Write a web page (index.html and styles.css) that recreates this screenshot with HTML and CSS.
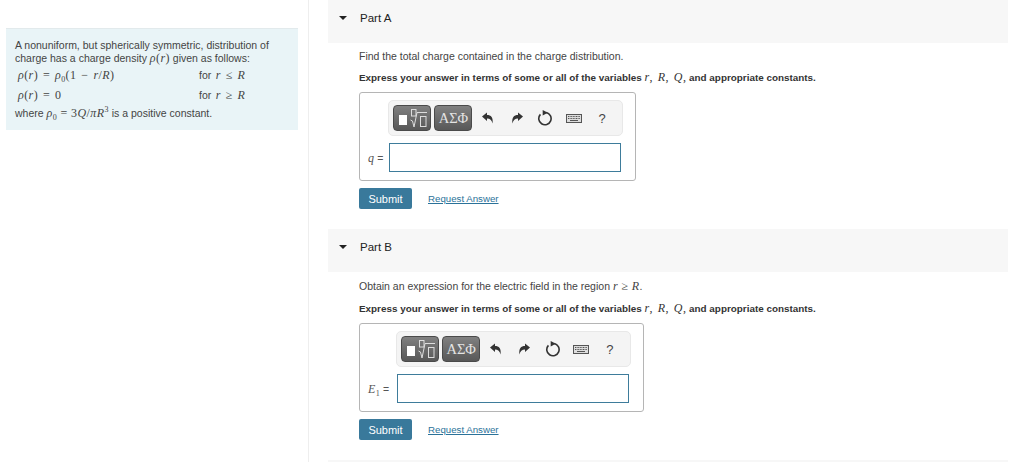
FILE: index.html
```html
<!DOCTYPE html>
<html lang="en">
<head>
  <meta charset="UTF-8">
  <title>Part A and Part B</title>
  <link rel="stylesheet" href="styles.css">
</head>
<body>
  <svg class="icon-defs" width="0" height="0">
    <symbol id="i-template" viewBox="0 0 38 26">
      <rect x="6" y="10" width="8" height="10" fill="#fff"/>
      <rect x="18.500" y="4.500" width="4.500" height="6.500" fill="none" stroke="#ddd"/>
      <path d="M17.500 15l2 1 1.500 6 3-14.500h10" fill="none" stroke="#ddd"/>
      <rect x="27.500" y="11.500" width="5.500" height="10" fill="none" stroke="#ddd"/>
    </symbol>
    <symbol id="i-undo" viewBox="0 0 14 14">
      <path d="M1 5.500L6 1.500V4C10 4 12.500 6.500 11.500 12.500C10.800 9 9 7.500 6 7.500V10Z" fill="#333"/>
    </symbol>
    <symbol id="i-redo" viewBox="0 0 14 14">
      <path d="M13 5.500L8 1.500V4C4 4 1.500 6.500 2.500 12.500C3.200 9 5 7.500 8 7.500V10Z" fill="#333"/>
    </symbol>
    <symbol id="i-reset" viewBox="0 0 14 14">
      <path d="M8 2.200A5.400 5.400 0 1 1 3 3.800" fill="none" stroke="#333" stroke-width="1.400"/>
      <path d="M5 0L9.400 2.300 5 4.800Z" fill="#333"/>
    </symbol>
    <symbol id="i-keys" viewBox="0 0 16 9">
      <rect x=".5" y=".5" width="15" height="8" fill="#ddd" stroke="#555"/>
      <path d="M2 2.500h12M2 4.500h12" stroke="#555" stroke-dasharray="1 .6"/>
      <path d="M4 6.500h8" stroke="#555"/>
    </symbol>
  </svg>

  <div class="page">
    <aside class="sidebar">
      <div class="intro">
        <p>A nonuniform, but spherically symmetric, distribution of charge has a charge density <span class="math"><i>ρ</i>(<i>r</i>)</span> given as follows:</p>
        <div class="cases">
          <span class="math"><i>ρ</i>(<i>r</i>) = <i>ρ</i><sub>0</sub>(1 − <i>r</i>/<i>R</i>)</span>
          <span>for <span class="math"><i>r</i> ≤ <i>R</i></span></span>
          <span class="math"><i>ρ</i>(<i>r</i>) = 0</span>
          <span>for <span class="math"><i>r</i> ≥ <i>R</i></span></span>
        </div>
        <p>where <span class="math"><i>ρ</i><sub>0</sub> = 3<i>Q</i>/<i>πR</i><sup>3</sup></span> is a positive constant.</p>
      </div>
    </aside>

    <main class="parts">
      <!-- Part A -->
      <section class="part">
        <h2 class="part-head"><span class="caret"></span>Part A</h2>
        <div class="part-body">
          <p class="question">Find the total charge contained in the charge distribution.</p>
          <p class="instruction">Express your answer in terms of some or all of the variables <span class="math"><i>r</i>, <i>R</i>, <i>Q</i>,</span> and appropriate constants.</p>
          <div class="answer-box">
            <div class="toolbar">
              <button class="tool-dark"><svg width="38" height="26"><use href="#i-template"/></svg></button>
              <button class="tool-dark tool-greek">ΑΣΦ</button>
              <button class="tool"><svg width="14" height="14"><use href="#i-undo"/></svg></button>
              <button class="tool"><svg width="14" height="14"><use href="#i-redo"/></svg></button>
              <button class="tool"><svg width="16" height="16"><use href="#i-reset"/></svg></button>
              <button class="tool"><svg width="16" height="9"><use href="#i-keys"/></svg></button>
              <button class="tool tool-help">?</button>
            </div>
            <div class="answer-row">
              <label class="answer-label"><span class="math"><i>q</i></span> =</label>
              <div class="answer-input"></div>
            </div>
          </div>
          <div class="actions">
            <button class="submit">Submit</button>
            <a class="request" href="#">Request Answer</a>
          </div>
        </div>
      </section>

      <!-- Part B -->
      <section class="part">
        <h2 class="part-head"><span class="caret"></span>Part B</h2>
        <div class="part-body">
          <p class="question question-math">Obtain an expression for the electric field in the region <span class="math"><i>r</i> ≥ <i>R</i></span>.</p>
          <p class="instruction">Express your answer in terms of some or all of the variables <span class="math"><i>r</i>, <i>R</i>, <i>Q</i>,</span> and appropriate constants.</p>
          <div class="answer-box">
            <div class="toolbar">
              <button class="tool-dark"><svg width="38" height="26"><use href="#i-template"/></svg></button>
              <button class="tool-dark tool-greek">ΑΣΦ</button>
              <button class="tool"><svg width="14" height="14"><use href="#i-undo"/></svg></button>
              <button class="tool"><svg width="14" height="14"><use href="#i-redo"/></svg></button>
              <button class="tool"><svg width="16" height="16"><use href="#i-reset"/></svg></button>
              <button class="tool"><svg width="16" height="9"><use href="#i-keys"/></svg></button>
              <button class="tool tool-help">?</button>
            </div>
            <div class="answer-row">
              <label class="answer-label answer-label-sub"><span class="math"><i>E</i><sub>1</sub></span> =</label>
              <div class="answer-input"></div>
            </div>
          </div>
          <div class="actions">
            <button class="submit">Submit</button>
            <a class="request" href="#">Request Answer</a>
          </div>
        </div>
      </section>
      <div class="part-end"></div>
    </main>
  </div>
</body>
</html>
```

FILE: styles.css
```css
* {
  box-sizing: border-box;
}

body {
  margin: 0;
  height: 462px;
  overflow: hidden;
  background: #fff;
  color: #333;
  font-family: "Liberation Sans", Arial, sans-serif;
  font-size: 10.5px;
}

p {
  margin: 0;
}

.icon-defs {
  position: absolute;
}

.page {
  display: flex;
  height: 462px;
}

.sidebar {
  width: 309px;
  padding: 28px 10px 0 6px;
  border-right: 1px solid #eee;
}

.intro {
  height: 102px;
  padding: 10px 10px 0 9px;
  background: #e9f4f7;
  border-top: 1px solid #e2eaec;
  line-height: 13px;
  color: #444;
}

.math {
  font-family: "Liberation Serif", "Times New Roman", serif;
  font-size: 12px;
  line-height: 1;
  letter-spacing: .4px;
}

.math sub,
.math sup {
  font-size: 8px;
  line-height: 0;
}

.cases {
  display: grid;
  grid-template-columns: 181px auto;
  grid-auto-rows: 20px;
  align-items: center;
  padding-left: 3px;
  margin-bottom: 2px;
  word-spacing: 1.500px;
}

.parts {
  flex: none;
  width: 680px;
  margin-left: 19px;
}

.part-head {
  display: flex;
  align-items: center;
  height: 43px;
  margin: 0;
  padding: 0 0 7px 11px;
  background: #f7f7f7;
  font-size: 11.500px;
  font-weight: normal;
  color: #222;
}

.caret {
  width: 0;
  height: 0;
  margin-right: 13px;
  border-left: 4px solid transparent;
  border-right: 4px solid transparent;
  border-top: 4px solid #222;
}

.part-body {
  padding: 7px 0 0 31px;
}

.question {
  line-height: 13px;
  color: #444;
}

.question-math {
  padding: 1px 0;
}

.instruction {
  margin-top: 8px;
  line-height: 13px;
  font-size: 9.900px;
  font-weight: bold;
  color: #333;
}

.instruction .math {
  font-weight: normal;
  word-spacing: 1.500px;
}

.answer-box {
  display: flex;
  flex-direction: column;
  align-items: flex-end;
  width: fit-content;
  margin-top: 8px;
  padding: 7px 14px 8px 8px;
  border: 1px solid #b5b5b5;
  border-radius: 3px;
}

.toolbar {
  display: flex;
  align-items: center;
  width: 235px;
  height: 36px;
  margin-right: -2px;
  padding-left: 4px;
  gap: 3px;
  background: #f4f4f4;
  border: 1px solid #e8e8e8;
  border-radius: 5px;
}

.tool-dark {
  width: 38px;
  height: 26px;
  padding: 0;
  background: linear-gradient(#808080, #585858);
  border: 1px solid #4a4a4a;
  border-radius: 4px;
  color: #e4e4e4;
}

.tool-dark svg {
  display: block;
  margin: -1px;
}

.tool-greek {
  font-family: "Liberation Serif", serif;
  font-size: 14.500px;
}

.tool {
  display: flex;
  align-items: center;
  justify-content: center;
  width: 25.500px;
  height: 26px;
  padding: 0;
  background: none;
  border: 0;
}

.tool-help {
  font-size: 13px;
  color: #444;
  font-family: "Liberation Sans", sans-serif;
}

.answer-row {
  display: flex;
  align-items: center;
  gap: 6px;
  margin-top: 7px;
}

.answer-label {
  color: #555;
}

.answer-label-sub {
  padding-right: 2px;
}

.answer-input {
  width: 232px;
  height: 29px;
  background: #fff;
  border: 1px solid #3e7c9b;
}

.actions {
  display: flex;
  align-items: center;
  gap: 16px;
  margin-top: 7px;
  margin-bottom: 20px;
}

.submit {
  width: 53px;
  height: 21px;
  padding: 0;
  background: #39799b;
  border: 0;
  border-radius: 2px;
  color: #fff;
  font-family: inherit;
  font-size: 11px;
}

.request {
  color: #2b7299;
  font-size: 9.700px;
}

.part-end {
  height: 4px;
  background: #f7f7f7;
}
```
